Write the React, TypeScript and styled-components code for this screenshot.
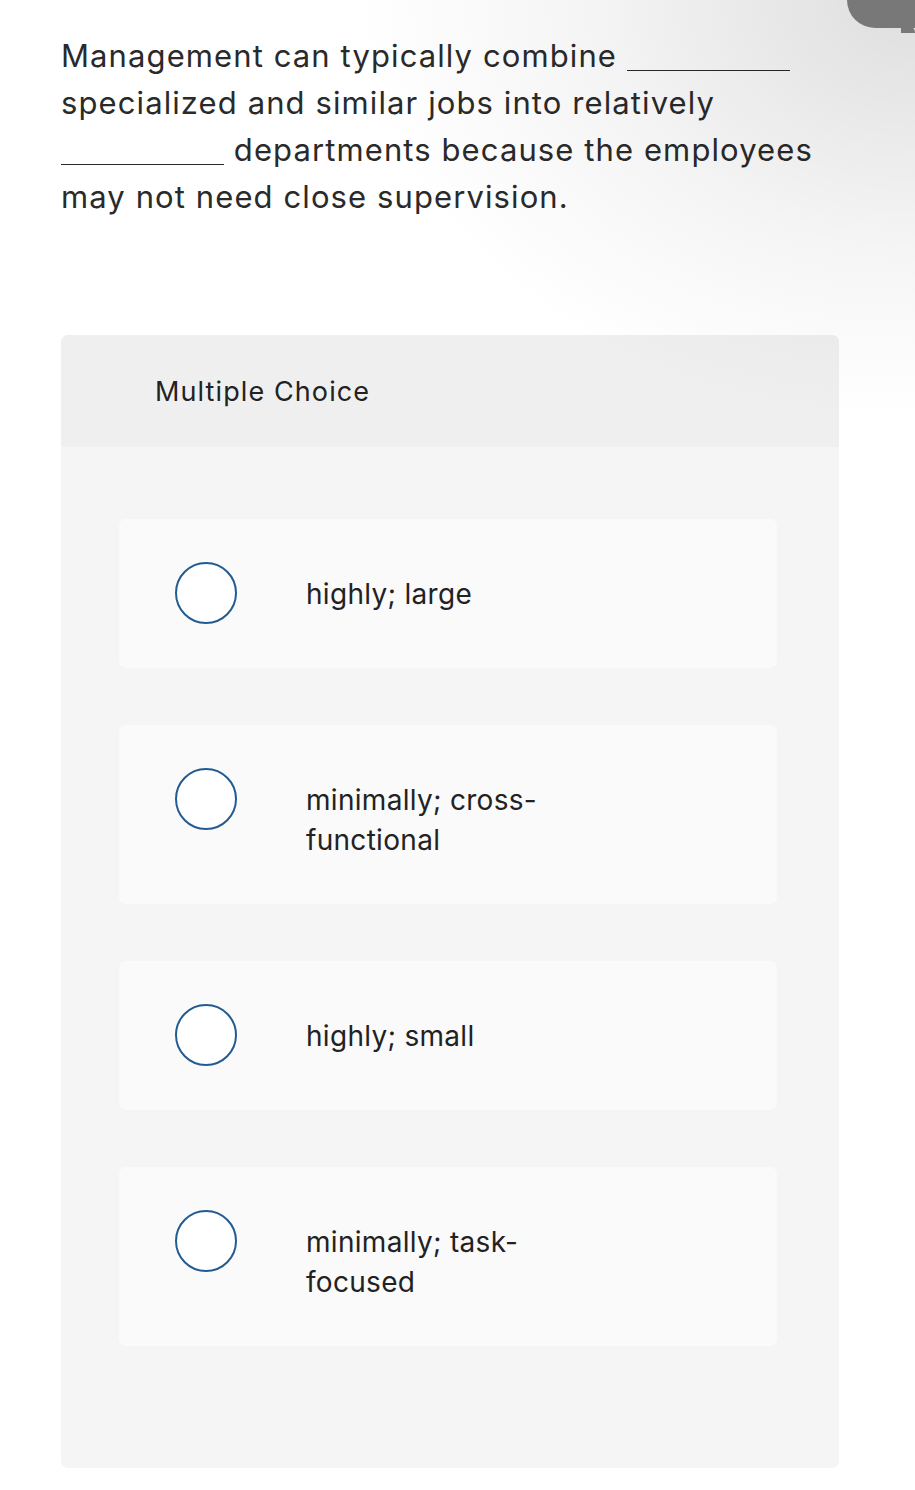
import styled, { createGlobalStyle } from 'styled-components';

const GlobalStyle = createGlobalStyle`
  * { box-sizing: border-box; }
  html, body {
    margin: 0;
    padding: 0;
    background: #ffffff;
  }
  body {
    font-family: Inter, "Open Sans", sans-serif;
    color: #222222;
  }
`;

interface Choice {
  id: string;
  label: string;
}

const choices: Choice[] = [
  { id: 'a', label: 'highly; large' },
  { id: 'b', label: 'minimally; cross-functional' },
  { id: 'c', label: 'highly; small' },
  { id: 'd', label: 'minimally; task-focused' },
];

function App() {
  return (
    <>
      <GlobalStyle />
      <Page>
        <Question>
          Management can typically combine <Blank aria-label="blank" /> specialized and similar
          jobs into relatively <Blank aria-label="blank" /> departments because the employees
          may not need close supervision.
        </Question>
        <Card>
          <CardHeader>Multiple Choice</CardHeader>
          <ChoiceList>
            {choices.map((choice) => (
              <ChoiceRow key={choice.id}>
                <Radio />
                <ChoiceText>{choice.label}</ChoiceText>
              </ChoiceRow>
            ))}
          </ChoiceList>
        </Card>
        <Shade />
        <CornerTab />
      </Page>
    </>
  );
}

export default App;

const Page = styled.div`
  position: relative;
  width: 915px;
  min-height: 1490px;
  padding: 32px 76px 22px 61px;
  overflow: hidden;
`;

const Question = styled.p`
  margin: 0;
  width: 778px;
  font-size: 31px;
  line-height: 47px;
  letter-spacing: 1.1px;
  color: #2a2a2a;
`;

const Blank = styled.span`
  display: inline-block;
  width: 163px;
  height: 1px;
  border-bottom: 1.5px solid #2a2a2a;
  vertical-align: -4px;
`;

const Card = styled.section`
  margin-top: 115px;
  width: 778px;
  height: 1133px;
  background: #f5f5f5;
  border-radius: 7px;
  overflow: hidden;
`;

const CardHeader = styled.h2`
  margin: 0;
  height: 112px;
  display: flex;
  align-items: center;
  padding-left: 94px;
  background: #efefef;
  font-size: 27px;
  font-weight: 400;
  letter-spacing: 1.1px;
  color: #222222;
`;

const ChoiceList = styled.div`
  display: flex;
  flex-direction: column;
  gap: 57px;
  padding: 72px 62px 0 58px;
`;

const ChoiceRow = styled.label`
  display: flex;
  align-items: flex-start;
  padding: 43px 0 44px 56px;
  background: #fafafa;
  border-radius: 7px;
  cursor: pointer;
`;

const Radio = styled.span`
  flex: none;
  width: 62px;
  height: 62px;
  border-radius: 50%;
  border: 2.5px solid #225a92;
  background: #ffffff;
`;

const ChoiceText = styled.span`
  margin: 12px 0 0 69px;
  max-width: 290px;
  font-size: 28px;
  line-height: 40px;
  letter-spacing: 0.3px;
  color: #222222;
`;

const Shade = styled.div`
  position: absolute;
  inset: 0;
  pointer-events: none;
  background: radial-gradient(ellipse 560px 420px at 100% 0%, rgba(0, 0, 0, 0.13), rgba(0, 0, 0, 0.04) 60%, rgba(0, 0, 0, 0) 100%);
`;

const CornerTab = styled.div`
  position: absolute;
  top: 0;
  right: 0;
  width: 68px;
  height: 28px;
  background: #787878;
  border-bottom-left-radius: 30px;
  &::after {
    content: '';
    position: absolute;
    right: 0;
    top: 24px;
    width: 14px;
    height: 9px;
    background: #787878;
    border-top-right-radius: 12px;
  }
`;
